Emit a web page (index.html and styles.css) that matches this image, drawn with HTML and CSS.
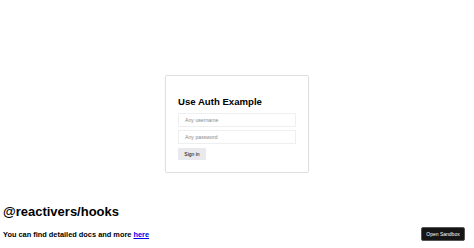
FILE: index.html
```html
<!DOCTYPE html>
<html>
<head>
<meta charset="utf-8">
<link rel="stylesheet" href="styles.css">
</head>
<body>
<main class="stage">
  <div class="card">
    <h2 class="card-title">Use Auth Example</h2>
    <input class="field" type="text" placeholder="Any username">
    <input class="field" type="password" placeholder="Any password">
    <button class="signin">Sign in</button>
  </div>
</main>
<footer class="info">
  <h1 class="lib">@reactivers/hooks</h1>
  <p class="docs">You can find detailed docs and more <a href="#">here</a></p>
</footer>
<button class="sandbox">Open Sandbox</button>
</body>
</html>
```
FILE: styles.css
```css
html, body {
  margin: 0;
  padding: 0;
  background: #ffffff;
  font-family: "Liberation Sans", Arial, sans-serif;
  color: #000;
}
body {
  width: 474px;
  height: 248px;
  overflow: hidden;
  position: relative;
}
.stage {
  display: flex;
  justify-content: center;
  padding-top: 75px;
}
.card {
  width: 144px;
  height: 98px;
  box-sizing: border-box;
  border: 1px solid #e0e0e0;
  border-radius: 2px;
  box-shadow: 0 0 2px rgba(0,0,0,0.05);
  padding: 20px 12px 0 12px;
  display: flex;
  flex-direction: column;
}
.card-title {
  margin: 0 0 5px 0;
  font-size: 9.6px;
  font-weight: bold;
  line-height: 12px;
}
.field {
  box-sizing: border-box;
  width: 118px;
  height: 14px;
  margin: 0 0 3px 0;
  padding: 0 6px;
  border: 1px solid #efefef;
  font-family: "Liberation Sans", Arial, sans-serif;
  font-size: 5.2px;
  outline: none;
}
.field::placeholder {
  color: #8a8a8a;
}
.signin {
  align-self: flex-start;
  width: 28px;
  height: 12px;
  margin-top: 1px;
  padding: 0;
  border: none;
  border-radius: 1px;
  background: #e9e9ed;
  font-family: "Liberation Sans", Arial, sans-serif;
  font-size: 5px;
  color: #000;
}
.info {
  padding: 0 3px;
  margin-top: 31px;
}
.lib {
  margin: 0;
  font-size: 13px;
  font-weight: bold;
  line-height: 16px;
}
.docs {
  margin: 10px 0 0 0;
  font-size: 7.4px;
  font-weight: bold;
  line-height: 9px;
}
.docs a {
  color: #0000ee;
  text-decoration: underline;
}
.sandbox {
  position: absolute;
  left: 421px;
  top: 227px;
  width: 44px;
  height: 14px;
  padding: 0;
  background: #151515;
  border: 1px solid #555;
  border-radius: 2px;
  color: #fff;
  font-family: "Liberation Sans", Arial, sans-serif;
  font-size: 5px;
}
```
